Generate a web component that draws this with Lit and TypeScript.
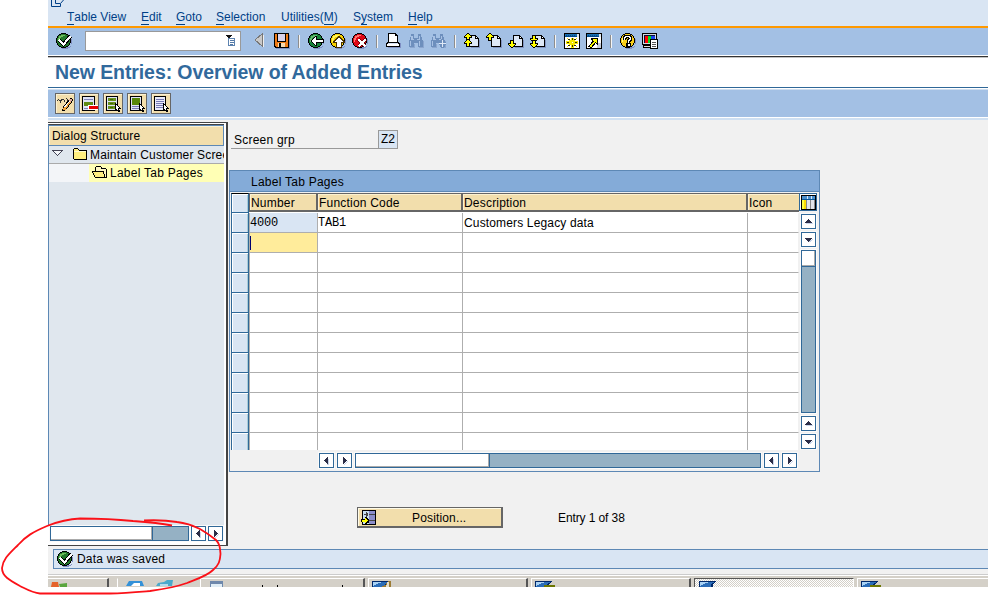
import { LitElement, html, css, svg } from "lit";
import { customElement, property } from "lit/decorators.js";

const ball = (fill: string, hi: string) => svg`
  <path d="M6 16h6v-1h2v-2h1v-2h1V6h-1v8H6z" fill="#7f8fc4"/>
  <path d="M5 0h5v1h2v1h1v1h1v2h1v5h-1v2h-1v1h-1v1h-2v1H5v-1H3v-1H2v-1H1v-2H0V5h1V3h1V2h1V1h2z" fill="#000"/>
  <path d="M5 1h5v1h2v1h1v2h1v5h-1v2h-1v1h-2v1H5v-1H3v-1H2v-2H1V5h1V3h1V2h2z" fill="${fill}"/>
  <path d="M5 2h4v1H7v1H5v1H4v2H3v2H2V5h1V3h2z" fill="${hi}"/>`;
const outlined = (d: string, outer: string, inner: string, w = 2) => svg`
  <path d="${d}" fill="none" stroke="${outer}" stroke-width="${w + 2}"/>
  <path d="${d}" fill="none" stroke="${inner}" stroke-width="${w}"/>`;
const page = svg`
  <path d="M7 15h9V7h-1v7H7z" fill="#8093c0"/>
  <path d="M5 2h7v1h1v1h1v1h1v9H5z" fill="#000"/>
  <path d="M6 3h5v3h3v7H6z" fill="#dde8f6"/><path d="M12 4h1v1h-1z" fill="#fff"/>`;
const upArr = (y: number) => svg`
  <path d="M3 ${y}h2v1h1v1h1v1h1v2H6v3H2v-3H0v-2h1v-1h1v-1h1z" fill="#000"/>
  <path d="M3 ${y + 1}h2v1h1v1h1v1H5v3H3v-3H1v-1h1v-1h1z" fill="#ff0"/>`;
const downArr = (y: number) => svg`
  <path d="M2 ${y}h4v3h2v2H7v1H6v1H5v1H3v-1H2v-1H1v-1H0v-2h2z" fill="#000"/>
  <path d="M3 ${y + 1}h2v3h2v1H6v1H5v1H3v-1H2v-1H1v-1h2z" fill="#ff0"/>`;
const win = svg`
  <rect width="16" height="16" fill="#000"/><rect x="1" y="1" width="14" height="14" fill="#fff"/>
  <rect x="1" y="1" width="14" height="3" fill="#1d6fae"/><path d="M1 3h1v-1h1v1h1v-1h1v1h1v-1h1v1h1v-1h1v1h1v-1h1v1h2v1H1z" fill="#004a8c"/>
  <path d="M13 1h2v3h-2z" fill="#dfe8f3"/>`;
const cursor = svg`
  <path d="M10 7h1v1h1v1h1v1h1v1h1v1h1v1h-2v1h1v2h-2v-2h-1v1h-2z" fill="#000"/>
  <path d="M11 9h1v1h1v1h1v1h-1v2h-1v-1h-1z" fill="#fff"/>`;
const bino = svg`
  <path d="M3 1h3v4h4V1h3v3h1v3h1v7h-5v-4H6v4H1V7h1V4h1z" fill="#6d8fbd"/>
  <path d="M3 3h2v3h6V3h1v4H9v-1H6v1H3v6H2V8h1zM11 8h1v5h-1z" fill="#a9c2e4"/>
  <path d="M2 14h4v-3h1v4H2zM11 14h4V8h1v7h-5z" fill="#8ba6cf"/>`;

const icons: Record<string, unknown> = {
  ok: svg`${ball("#23792b", "#6dbb5b")}${outlined("M3 7l4.500 4.500L14.500 3", "#000", "#fff")}`,
  back: svg`${ball("#168238", "#65b96c")}
    <path d="M7 3h2v3h7v4H9v3H7v-1H6v-1H5v-1H4V9H3V7h1V6h1V5h1V4h1z" fill="#000"/>
    <path d="M7 4h1v3h7v2H8v3H7v-1H6v-1H5V9H4V7h1V6h1V5h1z" fill="#fff"/>`,
  exit: svg`${ball("#f7d100", "#fff65e")}
    <path d="M8 3h2v1h1v1h1v1h1v1h1v1h1v2h-3v5H6v-5H3V8h1V7h1V6h1V5h1V4h1z" fill="#4b3300"/>
    <path d="M8 5h2v1h1v1h1v1h1v1h-2v5H7V9H5V8h1V7h1V6h1z" fill="#fff"/>`,
  cancel: svg`${ball("#df0715", "#ff7771")}${outlined("M6.500 6.500l7 7M13.500 6.500l-7 7", "#7a0009", "#fff", 1.5)}`,
  tri: svg`<path d="M8 1v12M8 1L1 7l7 6z" fill="#c9c9c9" stroke="#777"/><path d="M9 2v12" stroke="#eee"/>`,
  save: svg`<path d="M2 16h14V2h-1v13H2z" fill="#7f8fc4"/><path d="M0 0h15v15H1v-1H0z" fill="#000"/><path d="M1 1h2v8h9V1h2v13H2v-1H1z" fill="#ee7a16"/>
    <path d="M4 1h7v7H4z" fill="#d8d2ec"/><path d="M4 10h7v4H4z" fill="#f6d9b2"/><path d="M5 10h2v4H5z" fill="#000"/>`,
  print: svg`<path d="M14 10h1v5H2v-1h12z" fill="#7f8fc4"/><path d="M2 0h8v1h1v1h1v7h1v1h1v4H0v-4h1V9h1z" fill="#000"/><path d="M3 1h6v2h2v6H3z" fill="#fff"/><path d="M2 10h10v1H2z" fill="#d6e1f5"/><path d="M1 11h12v2H1z" fill="#fff"/>`,
  find: bino,
  findnext: svg`${bino}<path d="M11 6h3v3h2v3h-2v3h-3v-3H9V9h2z" fill="#6d8fbd"/><path d="M12 7h1v3h3v1h-3v3h-1v-3H9v-1h3z" fill="#dfe9f6"/>`,
  first: svg`${page}${upArr(0)}${upArr(6)}`,
  prev: svg`${page}${upArr(0)}`,
  next: svg`${page}${downArr(7)}`,
  last: svg`${page}${downArr(2)}${downArr(7)}`,
  session: svg`${win}<path d="M3.500 5.500l9 8M12.500 5.500l-9 8" stroke="#2e2b00" stroke-width="1.200"/>
    <path d="M7 5h3v10H7zM2 8h12v3H2z" fill="#f5e900"/>
    <path d="M3 5h1v1H3zM12 5h1v1h-1zM3 13h1v1H3zM12 13h1v1h-1zM5 7h2v1H5zM10 7h1v1h-1zM5 11h2v1H5zM10 11h1v1h-1z" fill="#f5e900"/>
    <path d="M8 5h1v2H8zM8 12h1v2H8zM3 9h2v1H3zM11 9h2v1h-2z" fill="#2e2b00"/>
    <path d="M8 9h1v1H8z" fill="#fff"/>`,
  shortcut: svg`${win}<path d="M11 10h4v5h-4z" fill="#c9ced9"/>
    <path d="M5.500 5.500h6v6l-2-2-4 5-3-1 4.500-5z" fill="#ff0" stroke="#000"/>`,
  help: svg`${ball("#f8ce19", "#fffb86")}${outlined("M4.500 6.500V4.500h1v-1h4v1h1v2h-1v1h-1v2", "#000", "#fff", 1.6)}<path d="M6 10h5v4H6z" fill="#000"/><path d="M7.500 11h2v2h-2z" fill="#fff"/>`,
  layout: svg`<path d="M0 0h15v12H0z" fill="#000"/><path d="M1 1h13v10H1z" fill="#d5d8e0"/><path d="M2 2h11v8H2z" fill="#07113a"/><path d="M3 3h3v7H3z" fill="#f00"/><path d="M6 3h3v7H6z" fill="#00df24"/><path d="M9 3h4v7H9z" fill="#1644ef"/><path d="M1 12h9v3H1z" fill="#000"/><path d="M2 13h6v1H2z" fill="#ddd"/><path d="M8 6h8v10H8z" fill="#000"/><path d="M9 7h6v8H9z" fill="#fff"/><path d="M10 9h4v1h-4zM10 11h4v1h-4zM10 13h4v1h-4z" fill="#555"/>`,
  change: svg`<path d="M5 15l1-4 6-8 1-1h2l1 2-1 2-6 8-2 1z" fill="#000"/>
    <path d="M6 14l1-3 5-6 2 1-5 7-1 1z" fill="#f1a33b"/><path d="M7 11l5-6h1l-5 7z" fill="#fff"/><path d="M12 3h2l1 1-1 2-2-1z" fill="#e8b0a0"/>
    <path d="M0 5l1.500-1.500 1.500 1v2l2-3h1.500l1 1v1.500M9 2l1 1v2" fill="none" stroke="#333"/>`,
  del: svg`<path d="M1 0h13v15H1z" fill="#000"/><path d="M2 1h11v13H2z" fill="#dfe3f7"/><path d="M3 3h9v1H3zM3 12h6v1H3z" fill="#8085b9"/><path d="M3 6h9v4H3z" fill="#608b15"/><path d="M7 9h10v5H7z" fill="#fff"/><path d="M8 10h9v3H8z" fill="#e90000"/>`,
  selall: svg`<path d="M1 0h12v15H1z" fill="#000"/><path d="M2 1h10v13H2z" fill="#dfe3f7"/><path d="M3 2h8v3H3zM3 6h8v3H3zM3 10h8v3H3z" fill="#6b9420"/><path d="M5 3h3v1H5zM5 7h3v1H5zM5 11h3v1H5z" fill="#3f6c00"/>${cursor}`,
  selblock: svg`<path d="M1 0h12v15H1z" fill="#000"/><path d="M2 1h10v13H2z" fill="#dfe3f7"/><path d="M3 2h8v7H3z" fill="#57860a"/><path d="M3 10h8v1H3zM3 12h7v1H3z" fill="#7779b4"/>${cursor}`,
  desel: svg`<path d="M1 0h12v15H1z" fill="#000"/><path d="M2 1h10v13H2z" fill="#e9ebfb"/><path d="M3 3h8v1H3zM3 5h8v1H3zM3 7h8v1H3zM3 9h8v1H3zM3 11h8v1H3z" fill="#777ab5"/>${cursor}`,
  folder: svg`<path d="M1 1h4v1h1v1h8v10H1v-1H0V2h1z" fill="#000"/><path d="M1 2h4v1h1v1h7v8H1z" fill="#ffef80"/><path d="M1 4h12v1H1z" fill="#fffbd2"/>`,
  open: svg`<path d="M4 1h5v1h1v1h4v1h1v9H3v-1H2v-2H1V8H0V6h3V2h1z" fill="#000"/><path d="M4 2h5v2h5v8h-1V9h-1V6H4z" fill="#fff9c2"/><path d="M1 7h10v2h1v3H3v-2H2V8H1z" fill="#ffef80"/>`,
  expand: svg`<path d="M1 3h11L7 8H6z" fill="#f5f8fb" stroke="#445"/>`,
  cols: svg`<path d="M0 0h15v15H0z" fill="#000"/><path d="M1 1h13v3H1z" fill="#4b8fcc"/><path d="M1 4h13v1H1z" fill="#075799"/><path d="M1 5h5v9H1z" fill="#fd0"/><path d="M1 5h2v9H1z" fill="#ff4"/><path d="M6 5h4v9H6zM10 5h4v9h-4z" fill="#e2e4e9"/><path d="M5 5h1v9H5zM9 5h1v9H9zM13 5h1v9h-1z" fill="#888"/><path d="M6 1h1v3H6zM10 1h1v3h-1z" fill="#dce9f8"/>`,
  position: svg`<path d="M1 0h14v15H1z" fill="#000"/><path d="M2 1h6v13H2z" fill="#c6dff0"/><path d="M8 1h6v13H8z" fill="#8c8dc9"/><path d="M8 4h6v1H8zM8 10h6v1H8zM3 4h4v1H3zM5 2h1v1h1v3H6v1H5z" fill="#444"/><path d="M0 9h4V7h2v1h1v1h1v4H6v1H4v-2H0z" fill="#000"/><path d="M1 10h3V8h1v1h1v1h1v1H6v1H5v1H4v-1H1z" fill="#ff0"/>`,
  list: svg`<path d="M0 0h6v1H5v1H4v1H2V2H1V1H0z" fill="#111"/><path d="M2.500 3.500h6v7h-6z" fill="#fff" stroke="#5d83b0"/><path d="M4 5h4v1H4zM4 7h4v1H4zM4 9h3v1H4z" fill="#547aa8"/>`,
  up: svg`<path d="M3 9h9v1H5v-1z" fill="#c8d5ea"/><path d="M7 5h1v1h1v1h1v1h1v1H4V8h1V7h1V6h1z" fill="#2b2d47"/>`,
  down: svg`<path d="M9 8h2V7h1v1h-1v1h-1v1H8V9h1z" fill="#c8d5ea"/><path d="M4 6h7v1h-1v1H9v1H8v1H7V9H6V8H5V7H4z" fill="#2b2d47"/>`,
  left: svg`<path d="M9 6h1v6H8v-1h1z" fill="#c8d5ea"/><path d="M8 4h1v7H8v-1H7V9H6V8H5V7h1V6h1V5h1z" fill="#2b2d47"/>`,
  right: svg`<path d="M10 8h1v1h-1v1H9v1H8v1H7v-1h1v-1h1V9h1z" fill="#c8d5ea"/><path d="M6 4h1v1h1v1h1v1h1v1H9v1H8v1H7v1H6z" fill="#2b2d47"/>`,
  monitor: svg`<path d="M0 0h17v1h-1v1h-1v1h-1v3H0z" fill="#00286a"/><path d="M1 1h14v1h-2v1h-1v3H1z" fill="#2b6db8"/><path d="M1 1h8v1H6v1H4v1H2v1H1z" fill="#a9d2f5"/>`,
  monitorpen: svg`<path d="M0 0h17v6H0z" fill="#00286a"/><path d="M1 1h14v2h-2v3H1z" fill="#2b6db8"/><path d="M1 1h8v1H6v1H4v1H2v1H1z" fill="#a9d2f5"/><path d="M16 0h3v6h-9V5h2V4h2V2h2z" fill="#9d7c35"/><path d="M15 1h2v5h-3V4h1z" fill="#e3dfcf"/>`,
  monitorgrid: svg`<path d="M0 0h17v1h-1v1h-1v1h-1v3H0z" fill="#00286a"/><path d="M1 1h14v1h-2v1h-1v3H1z" fill="#2b6db8"/><path d="M1 1h8v1H6v1H4v1H2v1H1z" fill="#a9d2f5"/><path d="M9 4h11v2H9z" fill="#6c7600"/>`,
};

@customElement("gui-icon")
export class GuiIcon extends LitElement {
  @property() name = "ok";
  static styles = css`
    :host { display: block; width: 17px; height: 17px; flex: none; }
    svg { display: block; overflow: visible; shape-rendering: crispEdges; }
  `;
  render() {
    return html`<svg width="17" height="17" viewBox="0 0 17 17">${icons[this.name]}</svg>`;
  }
}

@customElement("scroll-button")
export class ScrollButton extends LitElement {
  @property() dir = "up";
  static styles = css`
    :host { display: block; box-sizing: border-box; width: 15px; height: 15px; flex: none;
      border: 1px solid #306898; background: #fff; box-shadow: 0 0 0 1px #fafafa; }
    gui-icon { margin: -1px; }
  `;
  render() {
    return html`<gui-icon name=${this.dir}></gui-icon>`;
  }
}

const menus: [string, string, string, number][] = [
  ["", "T", "able View", 74], ["", "E", "dit", 35], ["", "G", "oto", 40],
  ["", "S", "election", 65], ["Utilities(", "M", ")", 72], ["S", "y", "stem", 55], ["", "H", "elp", 40],
];
const tools = [
  ["back", "exit", "cancel"], ["print", "find", "findnext"],
  ["first", "prev", "next", "last"], ["session", "shortcut"], ["help", "layout"],
];
const rows = [["4000", "TAB1", "Customers Legacy data", ""], ...Array.from({ length: 11 }, () => ["", "", "", ""])];
const tasks = [["s3", "monitorpen"], ["s4", "monitorgrid"], ["s5", "monitor"], ["s6", "monitorgrid"]];

@customElement("app-root")
export class AppRoot extends LitElement {
  static styles = css`
    :host { display: block; position: relative; width: 988px; height: 595px; overflow: hidden; background: #fff;
      font: 12px/16px "Liberation Sans", Arial, sans-serif; color: #000; white-space: nowrap; }
    * { box-sizing: border-box; }
    .window { margin-left: 48px; height: 587px; background: #f1f1f1; display: flex; flex-direction: column; }
    .menu { height: 26px; background: #d9e5f3; display: flex; flex-direction: column; flex: none; color: #003f87; }
    .sys { height: 8px; padding-left: 3px; }
    .sys svg { display: block; }
    .items { display: flex; padding-left: 19px; margin-top: 1px; }
    .key { border-bottom: 1px solid #003f87; display: inline-block; height: 16px; line-height: 16px; }
    .orange { height: 2px; background: #f90; flex: none; }
    .std { height: 27px; background: #a3c0e4; display: flex; padding: 5px 0 0 8px; flex: none; }
    .cmd { width: 156px; height: 20px; margin: -2px 13px 0 12px; background: #fff; border: 1px solid #999;
      display: flex; justify-content: flex-end; padding: 3px 0 0; flex: none; }
    .cmd gui-icon { margin-right: -3px; }
    .tri { margin: 0 3px 0 0; }
    .group { display: flex; gap: 5px; }
    .sep { width: 2px; height: 13px; margin: 2px 8px 0 7px; border-left: 1px solid #8d8d8d; border-right: 1px solid #f5f5f5; flex: none; }
    .rule { height: 3px; border-top: 1px solid #fff; border-bottom: 1px solid #c3c3c3; background: #333; flex: none; }
    .title { height: 29px; background: #fff; color: #31699c; font: bold 19.5px/29px "Liberation Sans", Arial, sans-serif;
      padding-left: 7px; flex: none; letter-spacing: -.09px; }
    .line { height: 3px; border-top: 1px solid #306898; border-bottom: 1px solid #cfdeef; background: #fff; flex: none; }
    .app { height: 27px; background: #a3c0e4; display: flex; gap: 4px; padding: 3px 0 0 7px; flex: none; }
    .btn { width: 20px; height: 21px; border: 1px solid #666; background: #f2deac; padding: 2px 1px; box-shadow: inset 1px 1px #fbf1d2; }
    .line2 { height: 5px; border-top: 1px solid #fff; border-bottom: 2px solid #f1f1f1; background: #cfe0f2; flex: none; }
    .main { height: 424px; display: flex; flex: none; }
    .tree { width: 180px; height: 424px; border: 1px solid #444; border-width: 1px 2px 1px 0; background: #fff;
      padding: 1px 2px 4px 0; flex: none; display: flex; flex-direction: column; }
    .pane { flex: 1; border-left: 1px solid #5d88b5; border-top: 1px solid #444; background: #e0e7ee; overflow: hidden; min-height: 0; }
    .head { height: 21px; border: 1px solid #5d88b5; border-left: 0; background: #f2deac; padding: 2px 0 0 3px; letter-spacing: .14px;
      box-shadow: inset 1px 1px #fbf1d2; }
    .node { display: flex; height: 18px; border-bottom: 1px solid #aaa; padding: 1px 0 0 2px; letter-spacing: .17px; overflow: hidden; }
    .node .exp { margin-right: 5px; }
    .leaf { display: flex; height: 18px; background: #f3f5f8; padding-left: 40px; letter-spacing: .25px; }
    .sel { flex: 1; background: #ffffb5; display: flex; padding: 1px 0 0 3px; }
    .sel span { padding-left: 1px; }
    .tscroll { height: 15px; display: flex; padding-left: 2px; gap: 2px; width: 176px; }
    .tb { margin-right: 1px; }
    .bar { display: flex; border: 1px solid #306898; background: #95b1c4; flex: none; box-shadow: 0 0 0 1px #fafafa; }
    .thumb { background: #fff; border: 0 solid #aaa; border-width: 0 1px 1px 0; flex: none; }
    .bar.h { height: 15px; } .bar.v { width: 15px; flex-direction: column; }
    .bar.v .thumb { height: 15px; box-shadow: 0 1px #306898; }
    .tb { width: 139px; } .tb .thumb { width: 101px; box-shadow: 1px 0 #306898; }
    .tb + scroll-button { margin-left: -1px; }
    .work { padding: 8px 0 0 1px; flex: 1; }
    .field { display: flex; padding-left: 2px; height: 19px; }
    .lab { width: 147px; border-bottom: 1px solid #999; padding: 2px 0 0 3px; letter-spacing: .22px; }
    .val { width: 20px; border: 1px solid #999; background: #d9e5f3; text-align: center; padding-top: 1px; }
    .mono { font-family: "Liberation Mono", monospace; letter-spacing: -.2px; }
    .panel { margin-top: 21px; width: 591px; height: 302px; border: 1px solid #5d88b5; }
    .ptitle { height: 21px; background: #84abd8; border-bottom: 1px solid #5d88b5; padding: 3px 0 0 21px; letter-spacing: .25px; }
    .body { display: flex; height: 259px; padding: 1px 0 0 1px; }
    .grid { width: 568px; height: 257px; display: grid; grid-template-columns: 18px 69px 145px 285px 51px;
      grid-template-rows: 20px; grid-auto-rows: 20px; overflow: hidden; background: #fff; }
    .rh { background: #d9e5f3; border: 1px solid #306898; border-top: 0; box-shadow: inset 1px 1px #fff, inset -1px 0 #a9ccd7; }
    .rh.top { border-top-width: 1px; border-top-style: solid; }
    .th { background: #f2deac; border: solid #666; border-width: 1px 2px 2px 0; padding: 1px 0 0 1px; letter-spacing: .2px;
      box-shadow: inset 1px 1px #fbf1d2; height: 19px; }
    .th.start { border-left-width: 1px; }
    .th.end { border-right-width: 0; }
    .td { border: 1px solid #aeaeae; border-width: 0 1px 1px 0; padding: 2px 0 0 1px; letter-spacing: .15px; }
    .td.start { border-left-width: 1px; }
    .td.mono { letter-spacing: -.2px; padding: 2px 0 0; }
    .td.end { border-right-color: #f1f1f1; }
    .td.ro { background: #d9e5f3; }
    .td.cur { background: #ffec9b; padding: 3px 0; }
    .caret { width: 1px; height: 14px; background: #000070; }
    .side { width: 18px; display: flex; flex-direction: column; align-items: center; gap: 3px; }
    .cfg { width: 18px; height: 18px; border: 1px solid #306898; padding: 1px; background: #fff; }
    .side .bar { height: 163px; }
    .hs { display: flex; gap: 3px; padding: 2px 0 0 89px; }
    .wide { width: 406px; } .wide .thumb { width: 133px; box-shadow: 1px 0 #306898; }
    .foot { display: flex; padding: 35px 0 0 128px; }
    .pos { width: 146px; height: 21px; border: solid #666; border-width: 1px 2px 2px 1px; background: #f2deac; display: flex;
      padding: 2px 0 0 3px; box-shadow: inset 1px 1px #fffbe8; letter-spacing: .15px; }
    .pos span { padding-left: 34px; }
    .entry { padding: 3px 0 0 55px; letter-spacing: -.1px; }
    .gap { height: 3px; flex: none; }
    .status { height: 20px; margin-left: 5px; border: 1px solid #5d88b5; border-right: 0; background: #d9e5f3; display: flex;
      padding: 1px 0 0 3px; flex: none; letter-spacing: .2px; }
    .status span { padding: 0 0 0 3px; }
    .edge { height: 6px; border-bottom: 1px solid #ccc; flex: none; }
    .task { flex: 1; display: flex; background: #d4d0c8; border-top: 1px solid #fff; padding-top: 2px; overflow: hidden; }
    .slot { border-left: 1px solid #fff; border-top: 1px solid #fff; border-right: 2px solid #555; margin-right: 3px; padding: 2px 0 0 3px; flex: none; }
    .slot svg { display: block; flex: none; }
    .s0 { width: 61px; border-left: 0; }
    .s1 { width: 80px; margin-left: 5px; border-right: 0; border-top-color: transparent; display: flex; gap: 12px; padding: 1px 0 0 8px; }
    .s2 { width: 165px; padding-left: 9px; } .s3 { width: 160px; } .s4 { width: 160px; }
    .s5 { width: 160px; border-color: #555 #fff #fff #555; border-right-width: 1px; padding-left: 4px;
      background: repeating-conic-gradient(#fff 0 25%, #d4d0c8 0 50%) 0 0 / 2px 2px; }
    .s6 { width: 150px; }
    .mark { position: absolute; left: 0; top: 505px; }
  `;

  render() {
    return html`
      <div class="window">
        <div class="menu">
          <div class="sys"><svg width="16" height="8"><path d="M.5 0v6.500h9V4M4.500 0v3.500h5L12.500 0" fill="none" stroke="#003f87"/></svg></div>
          <div class="items">${menus.map(([a, k, b, w]) => html`<div style="width:${w}px">${a}<span class="key">${k}</span>${b}</div>`)}</div>
        </div>
        <div class="orange"></div>
        <div class="std">
          <gui-icon name="ok"></gui-icon>
          <div class="cmd"><gui-icon name="list"></gui-icon></div>
          <gui-icon class="tri" name="tri"></gui-icon>
          <gui-icon name="save"></gui-icon>
          ${tools.map((g) => html`<div class="sep"></div><div class="group">${g.map((n) => html`<gui-icon name=${n}></gui-icon>`)}</div>`)}
        </div>
        <div class="rule"></div>
        <div class="title">New Entries: Overview of Added Entries</div>
        <div class="line"></div>
        <div class="app">${["change", "del", "selall", "selblock", "desel"].map((n) => html`<div class="btn"><gui-icon name=${n}></gui-icon></div>`)}</div>
        <div class="line2"></div>
        <div class="main">
          <div class="tree">
            <div class="pane">
              <div class="head">Dialog Structure</div>
              <div class="node"><gui-icon class="exp" name="expand"></gui-icon><gui-icon name="folder"></gui-icon>Maintain Customer Scree</div>
              <div class="leaf"><div class="sel"><gui-icon name="open"></gui-icon><span>Label Tab Pages</span></div></div>
            </div>
            <div class="tscroll">
              <div class="bar h tb"><div class="thumb"></div></div>
              <scroll-button dir="left"></scroll-button><scroll-button dir="right"></scroll-button>
            </div>
          </div>
          <div class="work">
            <div class="field"><div class="lab">Screen grp</div><div class="val mono">Z2</div></div>
            <div class="panel">
              <div class="ptitle">Label Tab Pages</div>
              <div class="body">
                <div class="grid">
                  <div class="rh top"></div>
                  ${["Number", "Function Code", "Description", "Icon"].map((t, i) => html`<div class="th ${i === 0 ? "start" : ""} ${i === 3 ? "end" : ""}">${t}</div>`)}
                  ${rows.map((r, n) => html`<div class="rh"></div>${r.map((t, i) => html`<div
                    class="td ${i === 0 ? "start" : ""} ${i < 2 ? "mono" : ""} ${i === 3 ? "end" : ""} ${i === 0 && n === 0 ? "ro" : ""} ${i === 0 && n === 1 ? "cur" : ""}"
                    >${i === 0 && n === 1 ? html`<div class="caret"></div>` : t}</div>`)}`)}
                </div>
                <div class="side">
                  <div class="cfg"><gui-icon name="cols"></gui-icon></div>
                  <scroll-button dir="up"></scroll-button><scroll-button dir="down"></scroll-button>
                  <div class="bar v"><div class="thumb"></div></div>
                  <scroll-button dir="up"></scroll-button><scroll-button dir="down"></scroll-button>
                </div>
              </div>
              <div class="hs">
                <scroll-button dir="left"></scroll-button><scroll-button dir="right"></scroll-button>
                <div class="bar h wide"><div class="thumb"></div></div>
                <scroll-button dir="left"></scroll-button><scroll-button dir="right"></scroll-button>
              </div>
            </div>
            <div class="foot">
              <div class="pos"><gui-icon name="position"></gui-icon><span>Position...</span></div>
              <div class="entry">Entry 1 of 38</div>
            </div>
          </div>
        </div>
        <div class="gap"></div>
        <div class="status"><gui-icon name="ok"></gui-icon><span>Data was saved</span></div>
        <div class="edge"></div>
        <div class="task">
          <div class="slot s0"><svg width="18" height="6"><path d="M1 1h6l1 5H0z" fill="#e5622a"/><path d="M8 3l8-1v4H9z" fill="#5aa63e"/></svg></div>
          <div class="slot s1">
            <svg width="18" height="6"><path d="M0 6l3-5h13l2 5z" fill="#3391d8"/><path d="M5 6l3-3h6v3z" fill="#fff"/></svg>
            <svg width="18" height="6"><path d="M0 6l2-3 6-1 3-2h6l-1 6z" fill="#4aa9cc"/><path d="M4 4h8v2H4z" fill="#b5dced"/></svg>
          </div>
          <div class="slot s2"><svg width="140" height="6"><path d="M0 0h13v6H0z" fill="#6e88ac"/><path d="M1 3h11v3H1z" fill="#e0edf5"/><path d="M52 4h1v2h-1zM67 4h1v2h-1zM132 4h1v2h-1z"/></svg></div>
          ${tasks.map(([s, icon]) => html`<div class="slot ${s}"><gui-icon name=${icon}></gui-icon></div>`)}
        </div>
      </div>
      <svg class="mark" width="230" height="90" fill="none" stroke="#fb1118" stroke-width="1.8">
        <path d="M172 20.500C160 18 148 17 133 16C114 14 98 13.500 80 13.500C66 14 57 17 47 21C33 27 26 31 18 40C9 49 3 54 2 63C2 71 9 75 20 81C28 85 33 88 40 88.500H110C125 88 137 87 150 86C165 84 176 82 187 78C197 74 207 71 213 65C219 60 220 56 220.500 49C220 43 220 39 216 35C211 31 207 28 200 24C192 20 186 18 177 17C165 15 155 15 144 15.500"/>
      </svg>
    `;
  }
}
